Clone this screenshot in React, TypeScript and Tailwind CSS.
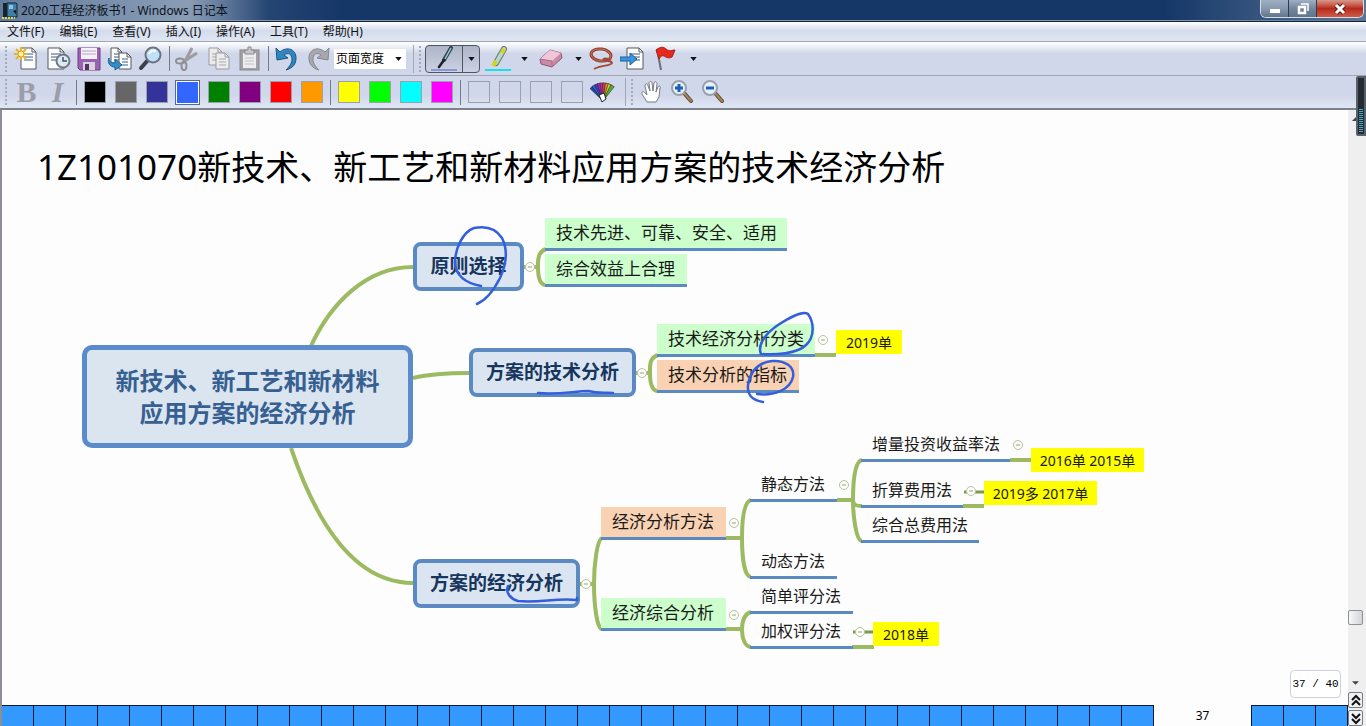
import React from 'react';
import { clsx } from 'clsx';

const UI_FONT = "font-['Noto_Sans','Noto_Sans_CJK_SC',sans-serif]";

const MENUS = ['文件(F)', '编辑(E)', '查看(V)', '插入(I)', '操作(A)', '工具(T)', '帮助(H)'];

const PEN_COLORS = [
  { name: '黑色', cls: 'bg-black' },
  { name: '灰色', cls: 'bg-[#666666]' },
  { name: '深蓝', cls: 'bg-[#333399]' },
  { name: '蓝色', cls: 'bg-[#3366ff]', active: true },
  { name: '绿色', cls: 'bg-[#008000]' },
  { name: '紫色', cls: 'bg-[#800080]' },
  { name: '红色', cls: 'bg-[#ff0000]' },
  { name: '橙色', cls: 'bg-[#ff9900]' },
];

const MARKER_COLORS = [
  { name: '黄色', cls: 'bg-[#ffff00]' },
  { name: '亮绿', cls: 'bg-[#00ff00]' },
  { name: '青色', cls: 'bg-[#00ffff]' },
  { name: '洋红', cls: 'bg-[#ff00ff]' },
];

const TOPICS = [
  { text: '原则选择', pos: 'left-[411px] top-[132px] w-[111px]' },
  { text: '方案的技术分析', pos: 'left-[467px] top-[238px] w-[167px]' },
  { text: '方案的经济分析', pos: 'left-[411px] top-[449px] w-[167px]' },
];

const TONES = {
  green: 'bg-[#ccffcc] text-[17px]',
  orange: 'bg-[#f9d2b3] text-[17px]',
  plain: 'text-[16px]',
};

const BRANCHES: { text: string; pos: string; tone: keyof typeof TONES }[] = [
  { text: '技术先进、可靠、安全、适用', pos: 'left-[543px] top-[108px] w-[242px]', tone: 'green' },
  { text: '综合效益上合理', pos: 'left-[543px] top-[144px] w-[142px]', tone: 'green' },
  { text: '技术经济分析分类', pos: 'left-[655px] top-[214px] w-[158px]', tone: 'green' },
  { text: '技术分析的指标', pos: 'left-[655px] top-[250px] w-[142px]', tone: 'orange' },
  { text: '经济分析方法', pos: 'left-[599px] top-[397px] w-[125px]', tone: 'orange' },
  { text: '经济综合分析', pos: 'left-[599px] top-[488px] w-[125px]', tone: 'green' },
  { text: '静态方法', pos: 'left-[748px] top-[359px] w-[87px]', tone: 'plain' },
  { text: '动态方法', pos: 'left-[748px] top-[436px] w-[87px]', tone: 'plain' },
  { text: '简单评分法', pos: 'left-[748px] top-[471px] w-[103px]', tone: 'plain' },
  { text: '加权评分法', pos: 'left-[748px] top-[506px] w-[103px]', tone: 'plain' },
  { text: '增量投资收益率法', pos: 'left-[859px] top-[319px] w-[149px]', tone: 'plain' },
  { text: '折算费用法', pos: 'left-[859px] top-[365px] w-[102px]', tone: 'plain' },
  { text: '综合总费用法', pos: 'left-[859px] top-[400px] w-[118px]', tone: 'plain' },
];

const EXAM_TAGS = [
  { text: '2019单', pos: 'left-[834px] top-[220px] w-[66px]' },
  { text: '2016单 2015单', pos: 'left-[1029px] top-[338px] w-[113px]' },
  { text: '2019多 2017单', pos: 'left-[982px] top-[371px] w-[113px]' },
  { text: '2018单', pos: 'left-[871px] top-[512px] w-[66px]' },
];

const LINKS = [
  'M311 346 C330 305 365 267 413 267',
  'M413 378 C430 374 450 373 469 373',
  'M291 448 C312 510 348 583 413 583',
  'M524 267 H538 M546 249 C537 252 538 262 538 267 C538 277 540 285 546 285',
  'M635 373 H650 M658 355 C649 358 650 366 650 373 C650 383 652 391 658 391',
  'M579 584 H594 M602 538 C597 540 594 565 594 584 C594 605 597 629 602 629',
  'M726 538 H742 M751 500 C744 502 742 520 742 538 C742 560 745 577 751 577',
  'M726 629 H742 M751 612 C744 614 742 622 742 630 C742 638 745 647 751 647',
  'M837 500 H853 M862 460 C855 461 853 480 853 500 C853 505 856 506 862 506',
  'M853 500 C853 515 856 541 862 541',
  'M815 355 H836 M1010 460 H1031 M963 506 H984 M852 647 H874',
];

const TOGGLES = [
  [530, 267], [642, 373], [823, 340], [586, 584], [734, 523],
  [734, 615], [844, 485], [1018, 445], [971, 491], [860, 632],
];

const INK = [
  'M481 286 C465 283 456 276 455 263 C455 248 463 232 474 228 C484 226 495 227 502 238 C508 250 506 265 500 278 C494 290 486 300 477 304',
  'M761 354 C775 355 797 354 806 345 C815 337 814 322 808 314 C803 310 787 319 778 325 C766 333 757 345 761 354',
  'M763 402 C752 400 747 395 748 385 C750 373 756 363 772 361 C784 360 795 366 793 377 C790 390 774 396 757 394',
  'M538 393 C560 395 574 391 588 391 C600 394 606 392 613 393',
  'M508 586 C505 593 511 599 518 601 C540 603 555 598 577 600 V598',
];

function Icon({ children, size = 'size-[26px]' }: { children: React.ReactNode; size?: string }) {
  return (
    <svg viewBox="0 0 26 26" className={clsx('shrink-0', size)} fill="none" aria-hidden="true">
      {children}
    </svg>
  );
}

function ToolButton({ label, children, width = 'w-[31px]' }: { label: string; children: React.ReactNode; width?: string }) {
  return (
    <button type="button" aria-label={label} className={clsx('flex h-7 shrink-0 items-center justify-center', width)}>
      {children}
    </button>
  );
}

function Separator() {
  return (
    <span className="flex w-1.5 shrink-0 justify-center">
      <span className="h-[25px] w-px bg-[#737a8c]" />
    </span>
  );
}

function Grip() {
  return (
    <span className="flex w-[11px] shrink-0 flex-col items-center gap-0.5">
      {Array.from({ length: 7 }, (_, i) => (
        <span key={i} className="size-0.5 bg-[#a3abc0]" />
      ))}
    </span>
  );
}

function Caret() {
  return (
    <svg viewBox="0 0 8 5" className="h-1 w-[7px]" aria-hidden="true">
      <path d="M0 0H8L4 5Z" fill="#111" />
    </svg>
  );
}

function Swatch({ name, cls, active }: { name: string; cls: string; active?: boolean }) {
  return (
    <ToolButton label={name}>
      <span className={clsx('flex size-[25px] items-center justify-center', active && 'border border-[#56698f] bg-white')}>
        <span className={clsx(cls, active ? 'size-[21px]' : 'size-[22px] border border-[#9aa0ad]')} />
      </span>
    </ToolButton>
  );
}

function Sheet({ x, y, w, h, gray }: { x: number; y: number; w: number; h: number; gray?: boolean }) {
  const line = gray ? '#a9a9ad' : '#3e5f86';
  return (
    <g>
      <path d={`M${x} ${y}h${w - 4}l4 4v${h - 4}h${-w}Z`} fill={gray ? '#ececee' : '#fdfdfd'} stroke={gray ? '#9b9ba0' : '#55585f'} />
      <path d={`M${x + w - 4} ${y}v4h4`} stroke={gray ? '#9b9ba0' : '#55585f'} />
      <path d={`M${x + 3} ${y + 6}h${w - 6}M${x + 3} ${y + 9}h${w - 6}M${x + 3} ${y + 12}h${w - 6}`} stroke={line} />
    </g>
  );
}

function Magnifier({ sign }: { sign: string }) {
  return (
    <Icon>
      <path d="M14 14L21 22" stroke="#5d4630" strokeWidth="4" strokeLinecap="round" />
      <path d="M14 14L21 22" stroke="#a9855c" strokeWidth="2" strokeLinecap="round" />
      <circle cx="9" cy="9" r="7" fill="#e4f0fb" stroke="#9aa1ab" strokeWidth="2" />
      <path d={sign} stroke="#1c5fb5" strokeWidth="3" />
    </Icon>
  );
}

function UndoArrow({ fill, stroke, flip }: { fill: string; stroke: string; flip?: boolean }) {
  return (
    <Icon>
      <path
        d="M2 2L3 14L14 12L10 9C14 6 18 8 18 13C18 17 16 20 12 24C19 22 22 18 22 12C22 3 13 0 6 6Z"
        transform={flip ? 'translate(26 0) scale(-1 1)' : undefined}
        fill={fill}
        stroke={stroke}
      />
    </Icon>
  );
}

function TitleBar() {
  return (
    <header className="flex h-[21px] shrink-0 justify-between bg-linear-to-r from-[#5d7697] via-[#153768] via-25% to-[#153768] shadow-[inset_0_-1px_0_#8798ae]">
      <div className="flex items-center gap-[3px] bg-linear-to-r from-[#647c9c] via-[#8a9db5] via-70% to-[#8a9db5]/0 pr-10 pl-0.5">
        <svg viewBox="0 0 16 18" className="h-[18px] w-4" aria-hidden="true">
          <path d="M1 1H6V15H1Z" fill="#16242f" />
          <path d="M5 1H14L15 2V15H5Z" fill="#3d7fa8" stroke="#12222e" />
          <path d="M7 3H11V7H7Z" fill="#8cc2dc" />
          <path d="M11 9L14 8V12Z" fill="#0c1116" />
          <path d="M0 16H13" stroke="#e8d44c" strokeWidth="2" strokeDasharray="2 1" />
        </svg>
        <h1 className="text-[12px] leading-5 whitespace-nowrap text-[#0b1220]">2020工程经济板书1 - Windows 日记本</h1>
      </div>
      <div className="flex bg-linear-to-r from-transparent to-[#5b7595] pr-0.5 pl-24">
        <div className="flex h-[18px] overflow-hidden rounded-b-md border border-t-0 border-[#d5dde6]">
          <button type="button" aria-label="最小化" className="flex w-7 items-center justify-center border-r border-[#2c3e55] bg-linear-to-b from-[#9fb0c2] via-[#8799ae] via-50% to-[#5f748d]">
            <span className="mt-1 h-1 w-2.5 bg-white" />
          </button>
          <button type="button" aria-label="还原" className="flex w-7 items-center justify-center border-r border-[#2c3e55] bg-linear-to-b from-[#9fb0c2] via-[#72869d] via-50% to-[#5f748d]">
            <svg viewBox="0 0 12 12" className="size-3" fill="none" aria-hidden="true">
              <path d="M4 1H11V8" stroke="#fff" strokeWidth="1.5" />
              <rect x="2" y="4" width="6" height="6" stroke="#fff" strokeWidth="2.5" />
            </svg>
          </button>
          <button type="button" aria-label="关闭" className="flex w-[46px] items-center justify-center bg-linear-to-b from-[#d7978a] via-[#b8281a] via-50% to-[#cf5a48]">
            <svg viewBox="0 0 12 12" className="size-3" aria-hidden="true">
              <path d="M2 2L10 10M10 2L2 10" stroke="#5a1a14" strokeWidth="5" />
              <path d="M2 2L10 10M10 2L2 10" stroke="#fff" strokeWidth="3" />
            </svg>
          </button>
        </div>
      </div>
    </header>
  );
}

function MainToolbar() {
  return (
    <div className="flex h-[34px] shrink-0 items-center border-b border-[#a2a7b5] bg-linear-to-b from-white via-[#d1d7ea] via-35% to-[#d1d7ea]">
      <Grip />
      <ToolButton label="新建便笺">
        <Icon>
          <Sheet x={7} y={2} w={15} h={21} />
          <path d="M7 1V14M0 8H13M2 3L12 13M12 3L2 13" stroke="#e8b32a" strokeWidth="2" />
          <circle cx="7" cy="8" r="3" fill="#fff3a0" stroke="#dca51c" />
        </Icon>
      </ToolButton>
      <ToolButton label="从模板新建">
        <Icon>
          <Sheet x={3} y={2} w={16} h={21} />
          <circle cx="18" cy="15" r="6.5" fill="#dfe8ee" stroke="#6d7983" strokeWidth="2" />
          <path d="M18 11V15H22" stroke="#35566e" strokeWidth="1.5" />
        </Icon>
      </ToolButton>
      <ToolButton label="保存">
        <Icon>
          <path d="M2 2H24V24H4L2 22Z" fill="#9b62b2" stroke="#6e3f86" />
          <path d="M5 2H21V13H5Z" fill="#f5f0f8" />
          <path d="M6 5H20M6 8H20" stroke="#b9a8c4" />
          <path d="M7 16H19V24H7Z" fill="#d9d3de" />
          <path d="M9 18H13V24H9Z" fill="#533368" />
        </Icon>
      </ToolButton>
      <ToolButton label="导入">
        <Icon>
          <Sheet x={4} y={2} w={11} h={15} />
          <Sheet x={12} y={7} w={12} h={16} />
          <path d="M2 12C2 16 5 17 8 17V13L15 19L8 24V21C3 21 0 17 2 12Z" fill="#2f8fc9" stroke="#1b6391" />
        </Icon>
      </ToolButton>
      <ToolButton label="查找">
        <Icon>
          <path d="M3 22L10 14" stroke="#3b3f47" strokeWidth="4" strokeLinecap="round" />
          <circle cx="15" cy="9" r="7.5" fill="#bfe0f6" stroke="#6b7480" strokeWidth="2" />
          <path d="M11 8C12 5 15 4 18 5" stroke="#fff" strokeWidth="2" />
        </Icon>
      </ToolButton>
      <Separator />
      <ToolButton label="剪切">
        <Icon>
          <path d="M17 2L9 17M22 7L8 16" stroke="#9c9ca1" strokeWidth="3" />
          <ellipse cx="5" cy="15" rx="4" ry="2.5" stroke="#8f8f95" strokeWidth="2" />
          <ellipse cx="9" cy="20" rx="2.5" ry="4" stroke="#8f8f95" strokeWidth="2" />
        </Icon>
      </ToolButton>
      <ToolButton label="复制">
        <Icon>
          <Sheet x={3} y={2} w={13} h={17} gray />
          <Sheet x={10} y={7} w={13} h={16} gray />
        </Icon>
      </ToolButton>
      <ToolButton label="粘贴">
        <Icon>
          <rect x="3" y="4" width="19" height="20" fill="#a2a2a6" stroke="#88888e" />
          <path d="M6 7H19V22H6Z" fill="#ededef" />
          <path d="M8 12H17M8 15H17M8 18H17" stroke="#c2c2c6" />
          <path d="M8 4H11V1H14V4H17V8H8Z" fill="#c9c9cc" stroke="#88888e" />
        </Icon>
      </ToolButton>
      <Separator />
      <ToolButton label="撤消">
        <UndoArrow fill="#2f86c4" stroke="#1d537c" />
      </ToolButton>
      <ToolButton label="恢复">
        <UndoArrow fill="#a6a8ad" stroke="#85878d" flip />
      </ToolButton>
      <div className="relative ml-px flex shrink-0 items-center">
        <select aria-label="缩放" defaultValue="width" className="h-5 w-[72px] appearance-none bg-white pl-0.5 text-[12px] leading-5 text-black">
          <option value="width">页面宽度</option>
        </select>
        <span className="pointer-events-none absolute right-1">
          <Caret />
        </span>
      </div>
      <span className="ml-[7px] h-7 w-px bg-[#a2a7b5]" />
      <Grip />
      <div className="flex h-7 shrink-0 items-center rounded-sm border border-[#4e5563] bg-linear-to-b from-[#aeb5c6] to-[#ccd2e3]">
        <ToolButton label="笔" width="w-9">
          <Icon>
            <path d="M20 2L13 14" stroke="#2e4654" strokeWidth="4" strokeLinecap="round" />
            <path d="M20 2L14 13" stroke="#9cc7d4" strokeWidth="1.5" />
            <path d="M13 14L8 21" stroke="#1d2329" strokeWidth="2.5" strokeLinecap="round" />
            <path d="M0 24H26" stroke="#4a63c8" />
          </Icon>
        </ToolButton>
        <span className="h-full w-px bg-[#4e5563]" />
        <ToolButton label="笔选项" width="w-4">
          <Caret />
        </ToolButton>
      </div>
      <ToolButton label="荧光笔" width="w-9">
        <Icon>
          <path d="M19 3L11 17" stroke="#66766b" strokeWidth="6" strokeLinecap="round" />
          <path d="M19 3L11 17" stroke="#b5d8c8" strokeWidth="4" strokeLinecap="round" />
          <path d="M19 3L17 7M11 15L8 20" stroke="#d6d41d" strokeWidth="4" />
          <path d="M0 24H26" stroke="#19dfe8" strokeWidth="2" />
        </Icon>
      </ToolButton>
      <ToolButton label="荧光笔选项" width="w-4">
        <Caret />
      </ToolButton>
      <ToolButton label="橡皮擦" width="w-[38px]">
        <Icon>
          <path d="M2 13L12 4L23 7L24 12L14 21L3 18Z" fill="#c98ba8" stroke="#8a5a72" />
          <path d="M2 13L12 4L23 7L14 15Z" fill="#f1c6d8" />
          <path d="M2 13L14 15V21" stroke="#a86d88" />
        </Icon>
      </ToolButton>
      <ToolButton label="橡皮擦选项" width="w-4">
        <Caret />
      </ToolButton>
      <ToolButton label="选择工具">
        <Icon>
          <ellipse cx="12" cy="9" rx="10" ry="6" transform="rotate(8 12 9)" stroke="#8d3b2a" strokeWidth="3" />
          <ellipse cx="12" cy="9" rx="10" ry="6" transform="rotate(8 12 9)" stroke="#d0745c" />
          <path d="M22 14C19 12 13 12 15 14C17 16 22 14 23 17C22 20 12 19 5 23" stroke="#a34b37" strokeWidth="2" />
        </Icon>
      </ToolButton>
      <ToolButton label="插入空间">
        <Icon>
          <Sheet x={7} y={2} w={16} h={21} />
          <path d="M0 11H10V7L17 13L10 19V15H0Z" fill="#3a93dc" stroke="#1d5f9c" />
        </Icon>
      </ToolButton>
      <ToolButton label="标志" width="w-9">
        <Icon>
          <path d="M4 3L8 24" stroke="#6b6f78" strokeWidth="2" />
          <path d="M3 4C8 0 11 1 13 3C16 6 19 4 22 4L19 11C15 13 13 11 11 10C9 9 7 11 6 13Z" fill="#e32a1c" stroke="#b01b12" />
        </Icon>
      </ToolButton>
      <ToolButton label="标志选项" width="w-[18px]">
        <Caret />
      </ToolButton>
    </div>
  );
}

function FormatToolbar() {
  const fan = ['#1d3fae', '#2868e0', '#5a34b8', '#8a2fc0', '#c22a9a', '#d83a4a', '#e88a2a', '#d6c92c', '#4fae3a'];
  return (
    <div className="flex h-[34px] shrink-0 items-center border-b-2 border-[#7c818c] bg-linear-to-b from-[#d1d7ea] via-[#d1d7ea] via-60% to-[#dfe7f4]">
      <Grip />
      <ToolButton label="加粗">
        <span className="font-['Liberation_Serif',serif] text-[30px] leading-7 font-bold text-[#9b9ea8]">B</span>
      </ToolButton>
      <ToolButton label="倾斜">
        <span className="font-['Liberation_Serif',serif] text-[30px] leading-7 font-bold text-[#9b9ea8] italic">I</span>
      </ToolButton>
      <Separator />
      {PEN_COLORS.map((c) => (
        <Swatch key={c.name} {...c} />
      ))}
      <Separator />
      {MARKER_COLORS.map((c) => (
        <Swatch key={c.name} {...c} />
      ))}
      <Separator />
      {[1, 2, 3, 4].map((n) => (
        <Swatch key={n} name={`自定义颜色 ${n}`} cls="bg-transparent" />
      ))}
      <ToolButton label="更多颜色">
        <Icon>
          {fan.map((color, i) => (
            <path key={color} d="M13 22L11 4L15 4Z" fill={color} stroke="#222" strokeWidth="0.5" transform={`rotate(${-40 + i * 9} 13 22)`} />
          ))}
          <path d="M9 16L14 14L16 20L12 23Z" fill="#fff" stroke="#222" />
        </Icon>
      </ToolButton>
      <span className="ml-[7px] h-7 w-px bg-[#a2a7b5]" />
      <Grip />
      <ToolButton label="平移" width="w-[30px]">
        <Icon>
          <path
            d="M8 23L3 15C2 12 5 12 6 14L8 16L6 7C6 4 9 4 9 7L11 12L10 4C10 2 13 2 13 4L14 12L15 4C16 2 18 3 18 5L17 13L19 8C20 6 22 7 21 9L20 18L17 23Z"
            fill="#fff"
            stroke="#777c86"
          />
        </Icon>
      </ToolButton>
      <ToolButton label="放大">
        <Magnifier sign="M5 9H13M9 5V13" />
      </ToolButton>
      <ToolButton label="缩小">
        <Magnifier sign="M5 9H13" />
      </ToolButton>
    </div>
  );
}

function MindMap() {
  return (
    <div className="absolute inset-0 text-[#1a1a1a]">
      <svg viewBox="2 110 1346 595" className="absolute top-0 left-0 h-[595px] w-[1346px]" fill="none" aria-hidden="true">
        {LINKS.map((d) => (
          <path key={d} d={d} stroke="#9cba62" strokeWidth="4" />
        ))}
        <path d="M964 492H984M853 632H873" stroke="#7f9a4a" strokeWidth="3" />
        {TOGGLES.map(([x, y]) => (
          <g key={`${x}-${y}`}>
            <circle cx={x} cy={y} r="4.5" fill="#fdfdfd" stroke="#b5c498" />
            <path d={`M${x - 2} ${y}H${x + 2}`} stroke="#93a870" />
          </g>
        ))}
      </svg>

      <div className="absolute top-[235px] left-[80px] flex h-[103px] w-[331px] items-center justify-center rounded-[10px] border-5 border-[#5b8bcb] bg-[#dbe5f0] text-center text-[24px] leading-8 font-bold text-[#376092]">
        新技术、新工艺和新材料
        <br />
        应用方案的经济分析
      </div>

      {TOPICS.map((t) => (
        <div
          key={t.text}
          className={clsx(
            'absolute flex h-[49px] items-center justify-center rounded-lg border-4 border-[#5b8ac3] bg-[#dbe5f1] text-[19px] font-bold whitespace-nowrap text-[#17365d]',
            t.pos,
          )}
        >
          {t.text}
        </div>
      ))}

      {BRANCHES.map((b) => (
        <div
          key={b.text}
          className={clsx('absolute flex h-[33px] items-center border-b-3 border-[#5b8ac3] pl-[11px] whitespace-nowrap', TONES[b.tone], b.pos)}
        >
          {b.text}
        </div>
      ))}

      {EXAM_TAGS.map((t) => (
        <div key={t.text} className={clsx('absolute flex h-6 items-center justify-center bg-[#ffff00] text-[14px] whitespace-nowrap', t.pos)}>
          {t.text}
        </div>
      ))}

      {/* handwritten strokes sit above every node */}
      <svg viewBox="2 110 1346 595" className="pointer-events-none absolute top-0 left-0 h-[595px] w-[1346px]" fill="none" aria-hidden="true">
        {INK.map((d) => (
          <path key={d} d={d} stroke="#335fdc" strokeWidth="2.5" strokeLinecap="round" />
        ))}
      </svg>
    </div>
  );
}

function PageCells({ count }: { count: number }) {
  return (
    <>
      {Array.from({ length: count }, (_, i) => (
        <span key={i} className="w-8 shrink-0 border-t border-r border-[#0a1a33] bg-[#3399ff]" />
      ))}
    </>
  );
}

function ScrollBar() {
  return (
    <div className="flex w-[18px] shrink-0 flex-col items-center bg-[#efefef] pr-[3px]">
      <button type="button" aria-label="向上滚动" className="flex h-[17px] w-[15px] items-center justify-center">
        <svg viewBox="0 0 8 4" className="h-1 w-2" aria-hidden="true">
          <path d="M0 4L4 0L8 4Z" fill="#444" />
        </svg>
      </button>
      <div className="flex flex-1 flex-col justify-end pb-[50px]">
        <div className="size-[15px] rounded-xs border border-[#8e9096] bg-linear-to-r from-[#f7f7f7] to-[#d2d4d8]" />
      </div>
      <button type="button" aria-label="向下滚动" className="flex h-[15px] w-[15px] items-center justify-center">
        <svg viewBox="0 0 8 4" className="h-1 w-[7px]" aria-hidden="true">
          <path d="M0 0L4 4L8 0Z" fill="#444" />
        </svg>
      </button>
      {[
        { label: '上一页', d: 'M2 6L6 2L10 6M2 11L6 7L10 11' },
        { label: '下一页', d: 'M2 2L6 6L10 2M2 7L6 11L10 7' },
      ].map((b) => (
        <button key={b.label} type="button" aria-label={b.label} className="mt-0.5 flex h-4 w-[15px] items-center justify-center rounded-xs border border-[#777b84] bg-[#f1f1f3]">
          <svg viewBox="0 0 12 13" className="h-[13px] w-3" fill="none" aria-hidden="true">
            <path d={b.d} stroke="#111" strokeWidth="2" />
          </svg>
        </button>
      ))}
    </div>
  );
}

export default function App() {
  return (
    <div className={clsx('relative flex h-screen flex-col overflow-hidden bg-[#fdfdfd]', UI_FONT)}>
      <TitleBar />
      <nav className="flex h-[21px] shrink-0 items-center gap-[15px] border-t border-b border-t-[#12233c] border-b-[#a2a7b5] bg-linear-to-b from-white via-[#d4dcec] via-45% to-[#dfe6f3] pl-[7px] text-[12px] text-[#111]">
        {MENUS.map((m) => (
          <button key={m} type="button" className="leading-4 whitespace-nowrap">
            {m}
          </button>
        ))}
      </nav>
      <MainToolbar />
      <FormatToolbar />

      <div className="flex min-h-0 flex-1">
        <main className="flex min-w-0 flex-1 flex-col border-l-2 border-[#8b8e94]">
          <section className="relative min-h-0 flex-1 overflow-hidden">
            <h2 className="pt-8 pl-[35px] text-[34px] leading-[50px] whitespace-nowrap text-black">
              <span className="text-[35px]">1Z101070</span>
              新技术、新工艺和新材料应用方案的技术经济分析
            </h2>
            <MindMap />
            <div className="absolute right-[7px] bottom-[7px] flex h-7 w-[51px] items-center justify-center rounded-sm border border-[#ccd2df] bg-white font-['Liberation_Mono',monospace] text-[11px] whitespace-nowrap text-black">
              37 / 40
            </div>
          </section>
          <footer className="flex h-[21px] shrink-0 justify-between">
            <div className="flex">
              <PageCells count={36} />
            </div>
            <span className="flex-1 text-center text-[12px] leading-[21px] text-black">37</span>
            <div className="flex border-l border-[#0a1a33]">
              <PageCells count={3} />
            </div>
          </footer>
        </main>
        <ScrollBar />
      </div>

      {/* floating level meter docked to the window edge */}
      <div className="absolute top-[76px] right-0 flex h-[60px] w-2.5 flex-col justify-end rounded-l-xs border-2 border-[#5a6068] bg-[#262b33] p-px">
        <div className="h-6 bg-[repeating-linear-gradient(to_bottom,#45aec6_0_1px,#262b33_1px_2px)]" />
      </div>
    </div>
  );
}
